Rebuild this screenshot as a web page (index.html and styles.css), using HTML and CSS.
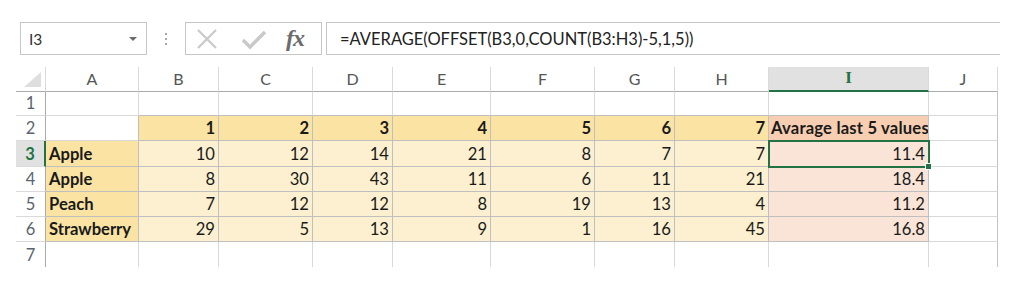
FILE: index.html
```html
<!DOCTYPE html>
<html lang="en">
  <head>
    <meta charset="utf-8" />
    <title>Average of last 5 values</title>
    <link rel="stylesheet" href="styles.css">
  </head>

  <body>
    <div class="formula-bar">
      <div class="name-box">
        <span>I3</span>
        <span class="caret"></span>
      </div>
      <div class="grip"><i></i><i></i><i></i></div>
      <div class="fn-buttons">
        <svg class="icon-cancel" width="22" height="20" viewBox="0 0 22 20">
          <path d="M2 1 L20 19 M20 1 L2 19" stroke="#c9c9c9" stroke-width="2.2" fill="none"/>
        </svg>
        <svg class="icon-enter" width="24" height="20" viewBox="0 0 24 20">
          <path d="M1 10 L8 17 L23 2" stroke="#c9c9c9" stroke-width="3.4" fill="none"/>
        </svg>
        <span class="fx">fx</span>
      </div>
      <div class="formula">=AVERAGE(OFFSET(B3,0,COUNT(B3:H3)-5,1,5))</div>
    </div>

    <div class="sheet">
      <!-- column headers -->
      <div class="ch corner"><span class="tri"></span></div>
      <div class="ch">A</div>
      <div class="ch">B</div>
      <div class="ch">C</div>
      <div class="ch">D</div>
      <div class="ch">E</div>
      <div class="ch">F</div>
      <div class="ch">G</div>
      <div class="ch">H</div>
      <div class="ch sel">I</div>
      <div class="ch">J</div>

      <!-- row 1 -->
      <div class="rh">1</div>
      <div class="c"></div>
      <div class="c top"></div>
      <div class="c top"></div>
      <div class="c top"></div>
      <div class="c top"></div>
      <div class="c top"></div>
      <div class="c top"></div>
      <div class="c top"></div>
      <div class="c top"></div>
      <div class="c edge"></div>

      <!-- row 2 -->
      <div class="rh">2</div>
      <div class="c side"></div>
      <div class="c gold num b">1</div>
      <div class="c gold num b">2</div>
      <div class="c gold num b">3</div>
      <div class="c gold num b">4</div>
      <div class="c gold num b">5</div>
      <div class="c gold num b">6</div>
      <div class="c gold num b">7</div>
      <div class="c peach b">Avarage last 5 values</div>
      <div class="c edge"></div>

      <!-- row 3 -->
      <div class="rh sel">3</div>
      <div class="c gold b">Apple</div>
      <div class="c cream num">10</div>
      <div class="c cream num">12</div>
      <div class="c cream num">14</div>
      <div class="c cream num">21</div>
      <div class="c cream num">8</div>
      <div class="c cream num">7</div>
      <div class="c cream num">7</div>
      <div class="c blush num active">11.4</div>
      <div class="c edge"></div>

      <!-- row 4 -->
      <div class="rh">4</div>
      <div class="c gold b">Apple</div>
      <div class="c cream num">8</div>
      <div class="c cream num">30</div>
      <div class="c cream num">43</div>
      <div class="c cream num">11</div>
      <div class="c cream num">6</div>
      <div class="c cream num">11</div>
      <div class="c cream num">21</div>
      <div class="c blush num">18.4</div>
      <div class="c edge"></div>

      <!-- row 5 -->
      <div class="rh">5</div>
      <div class="c gold b">Peach</div>
      <div class="c cream num">7</div>
      <div class="c cream num">12</div>
      <div class="c cream num">12</div>
      <div class="c cream num">8</div>
      <div class="c cream num">19</div>
      <div class="c cream num">13</div>
      <div class="c cream num">4</div>
      <div class="c blush num">11.2</div>
      <div class="c edge"></div>

      <!-- row 6 -->
      <div class="rh">6</div>
      <div class="c gold b">Strawberry</div>
      <div class="c cream num">29</div>
      <div class="c cream num">5</div>
      <div class="c cream num">13</div>
      <div class="c cream num">9</div>
      <div class="c cream num">1</div>
      <div class="c cream num">16</div>
      <div class="c cream num">45</div>
      <div class="c blush num">16.8</div>
      <div class="c edge"></div>

      <!-- row 7 -->
      <div class="rh last">7</div>
      <div class="c last"></div>
      <div class="c last"></div>
      <div class="c last"></div>
      <div class="c last"></div>
      <div class="c last"></div>
      <div class="c last"></div>
      <div class="c last"></div>
      <div class="c last"></div>
      <div class="c last"></div>
      <div class="c last edge"></div>
    </div>
  </body>
</html>
```

FILE: styles.css
```css
body {
  margin: 0;
  background-color: #fff;
  font-family: Lato, 'Liberation Sans', sans-serif;
  color: #1a1a1a;
}

/* formula bar */
.formula-bar {
  display: flex;
  align-items: stretch;
  height: 33px;
  margin-top: 22px;
  padding-left: 20px;
}

.name-box {
  width: 127px;
  box-sizing: border-box;
  border: 1px solid #c6c6c6;
  display: flex;
  align-items: center;
  justify-content: space-between;
  padding: 0 9px 0 8px;
  font-size: 15.5px;
  color: #333;
}

.caret {
  width: 0;
  height: 0;
  border-left: 4px solid transparent;
  border-right: 4px solid transparent;
  border-top: 4px solid #6a6a6a;
}

.grip {
  width: 38px;
  display: flex;
  flex-direction: column;
  align-items: center;
  justify-content: center;
  gap: 3px;
}

.grip i {
  width: 2px;
  height: 2px;
  background-color: #a8a8a8;
}

.fn-buttons {
  width: 137px;
  box-sizing: border-box;
  border: 1px solid #c6c6c6;
  display: flex;
  align-items: center;
  padding: 0 0 0 10px;
}

.icon-cancel {
  margin-right: 24px;
}

.icon-enter {
  margin-right: 20px;
  margin-top: 2px;
}

.fx {
  font-family: 'Liberation Serif', serif;
  font-style: italic;
  font-weight: bold;
  font-size: 24px;
  color: #6b6b6b;
  letter-spacing: -1px;
}

.formula {
  width: 674px;
  margin-left: 4px;
  box-sizing: border-box;
  border: 1px solid #c6c6c6;
  border-right: none;
  display: flex;
  align-items: center;
  padding-left: 13px;
  font-size: 16.5px;
  color: #222;
}

/* grid */
.sheet {
  display: grid;
  grid-template-columns: 30px 93px 80px 94px 80px 98px 104px 80px 94px 160px 69px;
  grid-template-rows: 25px 24px 25px 26px 25px 25px 25px 25px;
  margin: 12px 0 0 16px;
  font-size: 16.6px;
}

.sheet > div {
  box-sizing: border-box;
  display: flex;
  align-items: flex-end;
  padding: 0 3px 2px 3px;
  white-space: nowrap;
  overflow: hidden;
}

.ch {
  justify-content: center;
  align-items: center !important;
  color: #555;
  font-size: 16px;
  border-right: 1px solid #dadada;
  border-bottom: 1px solid #ababab;
}

.ch.sel {
  background-color: #e1e1e1;
  color: #217346;
  font-family: 'Liberation Serif', serif;
  font-weight: bold;
  font-size: 17px;
  border-bottom: 2px solid #217346;
}

.corner {
  justify-content: flex-end !important;
  align-items: flex-end !important;
  padding: 0 4px 4px 0 !important;
}

.tri {
  width: 0;
  height: 0;
  border-left: 17px solid transparent;
  border-bottom: 15px solid #dedede;
}

.rh {
  justify-content: center;
  color: #5a6470;
  font-size: 16.5px;
  border-right: 1px solid #ababab;
  border-bottom: 1px solid #dadada;
}

.rh.sel {
  background-color: #e1e1e1;
  color: #217346;
  font-weight: bold;
  border-right: 2px solid #217346;
}

.c {
  border-right: 1px solid #d9d9d9;
  border-bottom: 1px solid #d9d9d9;
}

.c.top {
  border-bottom-color: #bfbfbf;
}

.c.side {
  border-right-color: #bfbfbf;
}

.c.edge {
  border-right-color: #c4c4c4;
}

.last {
  border-bottom: none !important;
}

.num {
  justify-content: flex-end;
}

.b {
  font-weight: bold;
}

.gold {
  background-color: #fbe4a3;
  border-color: #bfbfbf !important;
}

.cream {
  background-color: #fcf0d0;
  border-color: #bfbfbf !important;
}

.peach {
  background-color: #f7ceb1;
  border-color: #bfbfbf !important;
  padding-left: 2px !important;
  letter-spacing: 0.2px;
}

.blush {
  background-color: #f9e4d7;
  border-color: #bfbfbf !important;
}

.active {
  position: relative;
  overflow: visible !important;
  outline: 2px solid #217346;
  outline-offset: -1px;
  z-index: 1;
}

.active::after {
  content: '';
  position: absolute;
  right: -4px;
  bottom: -4px;
  width: 5px;
  height: 5px;
  background-color: #217346;
  border: 1px solid #fff;
}
```
